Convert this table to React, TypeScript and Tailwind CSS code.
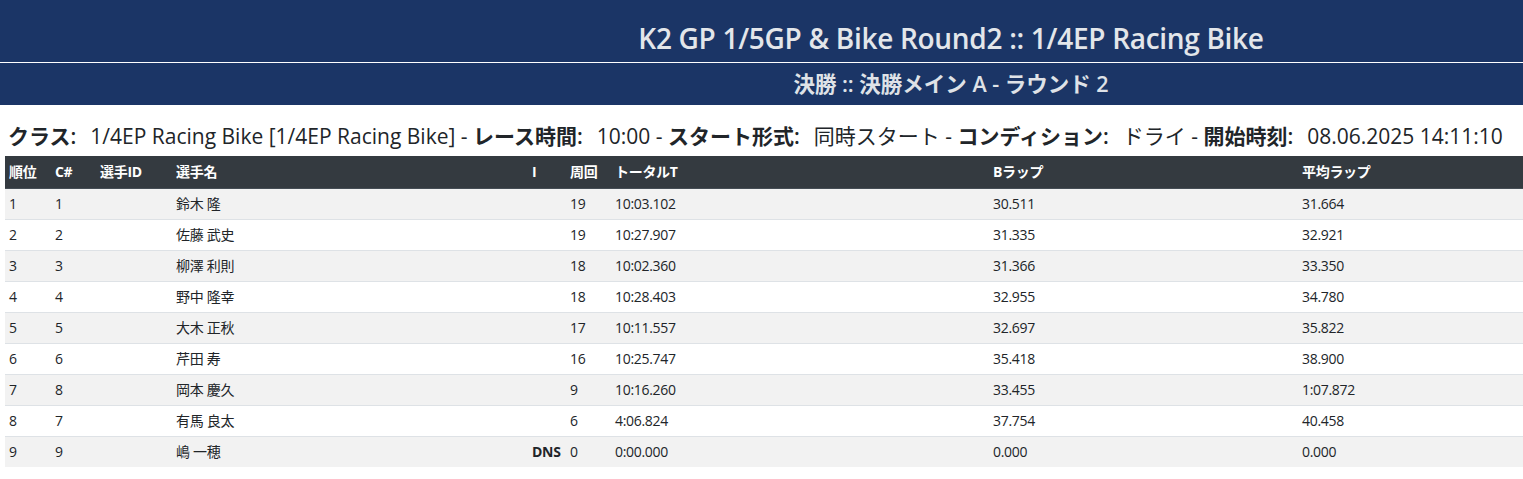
import React from "react";

const rows = [
  ["1", "1", "", "鈴木 隆", "", "19", "10:03.102", "30.511", "31.664"],
  ["2", "2", "", "佐藤 武史", "", "19", "10:27.907", "31.335", "32.921"],
  ["3", "3", "", "柳澤 利則", "", "18", "10:02.360", "31.366", "33.350"],
  ["4", "4", "", "野中 隆幸", "", "18", "10:28.403", "32.955", "34.780"],
  ["5", "5", "", "大木 正秋", "", "17", "10:11.557", "32.697", "35.822"],
  ["6", "6", "", "芹田 寿", "", "16", "10:25.747", "35.418", "38.900"],
  ["7", "8", "", "岡本 慶久", "", "9", "10:16.260", "33.455", "1:07.872"],
  ["8", "7", "", "有馬 良太", "", "6", "4:06.824", "37.754", "40.458"],
  ["9", "9", "", "嶋 一穂", "DNS", "0", "0:00.000", "0.000", "0.000"],
];

const headers = ["順位", "C#", "選手ID", "選手名", "I", "周回", "トータルT", "Bラップ", "平均ラップ"];
const widths = [46, 45, 76, 356, 38, 45, 378, 309, 225];

function Label({ children }: { children: React.ReactNode }) {
  return <b className="font-semibold mr-[14px]">{children}</b>;
}

export default function App() {
  return (
    <div
      className="bg-white text-[#212529]"
      style={{ fontFamily: '"Open Sans", "Noto Sans CJK JP", sans-serif' }}
    >
      <div className="bg-[#1b3566]">
        <div className="flex h-[62px] items-center">
          <div className="w-[379px] shrink-0" />
          <div className="flex-1 text-center text-[28px] font-semibold text-[#e3e6ea] tracking-[-0.3px] pt-[14px]">
            K2 GP 1/5GP &amp; Bike Round2 :: 1/4EP Racing Bike
          </div>
        </div>
        <div className="h-px bg-white" />
        <div className="flex h-[42px] items-center">
          <div className="w-[379px] shrink-0" />
          <div className="flex-1 text-center text-[21.5px] font-semibold text-[#dfe2e7] pt-[1px]">
            決勝 :: 決勝メイン A - ラウンド 2
          </div>
        </div>
      </div>
      <div className="pl-[8px] pt-[17px] pb-[6px] text-[21px] leading-[28px] whitespace-nowrap">
        <Label>クラス:</Label>1/4EP Racing Bike [1/4EP Racing Bike] -{" "}
        <Label>レース時間:</Label>10:00 -{" "}
        <Label>スタート形式:</Label>同時スタート -{" "}
        <Label>コンディション:</Label>ドライ -{" "}
        <Label>開始時刻:</Label>08.06.2025 14:11:10
      </div>
      <div className="pl-[5px]">
        <table className="table-fixed border-collapse w-[1518px] text-[14px] tracking-[-0.3px]">
          <colgroup>
            {widths.map((w, i) => (
              <col key={i} style={{ width: w }} />
            ))}
          </colgroup>
          <thead>
            <tr className="bg-[#343a40] text-white h-[32px] border-b border-[#454d55]">
              {headers.map((h, i) => (
                <th key={i} className="text-left font-bold px-[4px] align-middle whitespace-nowrap">
                  {h}
                </th>
              ))}
            </tr>
          </thead>
          <tbody>
            {rows.map((r, ri) => (
              <tr
                key={ri}
                className={`h-[31px] ${ri % 2 === 0 ? "bg-[#f2f2f2]" : "bg-white"} ${ri < rows.length - 1 ? "border-b border-[#dee2e6]" : ""}`}
              >
                {r.map((c, ci) => (
                  <td
                    key={ci}
                    className={`px-[4px] align-middle whitespace-nowrap ${ci === 4 ? "font-bold" : ""}`}
                  >
                    {c}
                  </td>
                ))}
              </tr>
            ))}
          </tbody>
        </table>
      </div>
    </div>
  );
}
